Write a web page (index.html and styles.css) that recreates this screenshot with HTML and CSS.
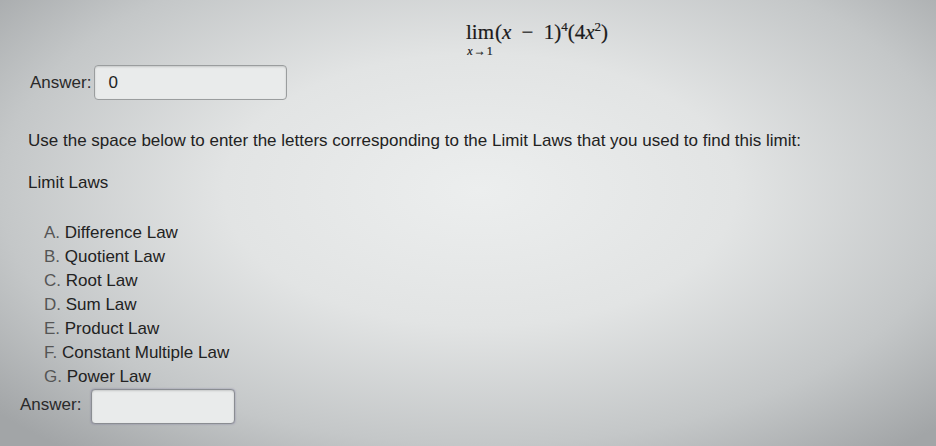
FILE: index.html
```html
<!DOCTYPE html>
<html>
<head>
<meta charset="utf-8">
<link rel="stylesheet" href="styles.css">
</head>
<body>
<div class="page">
  <div class="formula">
    <div class="lim">
      <span class="lim-word">lim</span>
      <span class="lim-sub"><span class="var">x</span><span class="arrow">→</span>1</span>
    </div>
    <div class="expr">(<i>x</i> <span class="minus">−</span> 1)<sup>4</sup>(4<i>x</i><sup>2</sup>)</div>
  </div>

  <div class="answer-row first">
    <span class="label">Answer:</span>
    <div class="box wide">0</div>
  </div>

  <p class="instr">Use the space below to enter the letters corresponding to the Limit Laws that you used to find this limit:</p>

  <p class="heading">Limit Laws</p>

  <ul class="laws">
    <li><span class="letter">A.</span> Difference Law</li>
    <li><span class="letter">B.</span> Quotient Law</li>
    <li><span class="letter">C.</span> Root Law</li>
    <li><span class="letter">D.</span> Sum Law</li>
    <li><span class="letter">E.</span> Product Law</li>
    <li><span class="letter">F.</span> Constant Multiple Law</li>
    <li><span class="letter">G.</span> Power Law</li>
  </ul>

  <div class="answer-row second">
    <span class="label">Answer:</span>
    <div class="box narrow"></div>
  </div>
</div>
</body>
</html>
```

FILE: styles.css
```css
html, body {
  margin: 0;
  padding: 0;
  height: 100%;
}
body {
  width: 936px;
  height: 446px;
  overflow: hidden;
  font-family: "Liberation Sans", Arial, sans-serif;
  font-size: 17px;
  color: #222;
  background:
    radial-gradient(ellipse 640px 340px at 480px 190px, #eceeee 0%, #e2e4e4 40%, #c4c7c8 75%, #a2a5a7 100%);
}
.page {
  padding: 20px 0 0 28px;
}
.formula {
  display: flex;
  align-items: flex-start;
  margin-left: 438px;
  font-family: "Liberation Serif", "DejaVu Serif", serif;
  font-size: 21px;
  color: #1a1a1a;
  height: 38px;
  -webkit-text-stroke: 0.2px #1a1a1a;
}
.lim {
  display: flex;
  flex-direction: column;
  align-items: center;
}
.lim-word {
  line-height: 24px;
}
.lim-sub {
  display: flex;
  font-size: 12px;
  line-height: 13px;
  margin-top: 1px;
}
.var {
  font-style: italic;
  margin-right: 1px;
}
.arrow {
  margin-right: 1px;
}
.expr {
  line-height: 24px;
  margin-left: 1px;
}
.expr sup {
  font-size: 13px;
  vertical-align: 8px;
  line-height: 0;
}
.minus {
  margin: 0 5px;
}
.answer-row {
  display: flex;
  align-items: center;
}
.answer-row.first {
  margin-top: 7px;
  margin-left: 2px;
}
.answer-row.first .label {
  margin-right: 3px;
}
.answer-row.second {
  margin-left: -8px;
  margin-top: 0;
}
.answer-row.second .label {
  margin-right: 10px;
  margin-top: -4px;
}
.label {
  color: #2a2a2a;
}
.box {
  box-sizing: border-box;
  background: #e9ebeb;
  border: 1px solid #9a9d9e;
  border-radius: 4px;
  box-shadow: inset 0 1px 2px rgba(0,0,0,0.15);
  display: flex;
  align-items: center;
  padding-left: 13px;
  color: #222;
}
.box.wide {
  width: 193px;
  height: 35px;
}
.box.narrow {
  width: 144px;
  height: 35px;
  border-color: #8a8d92;
  box-shadow: 0 0 2px rgba(90,80,140,0.5), inset 0 1px 2px rgba(0,0,0,0.15);
}
.instr {
  margin: 31px 0 0 0;
  line-height: 20px;
}
.heading {
  margin: 22px 0 0 0;
  line-height: 20px;
}
.laws {
  list-style: none;
  margin: 28px 0 0 0;
  padding: 0 0 0 16px;
}
.laws li {
  line-height: 24px;
  height: 24px;
  color: #222;
}
.letter {
  color: #555;
}
```
